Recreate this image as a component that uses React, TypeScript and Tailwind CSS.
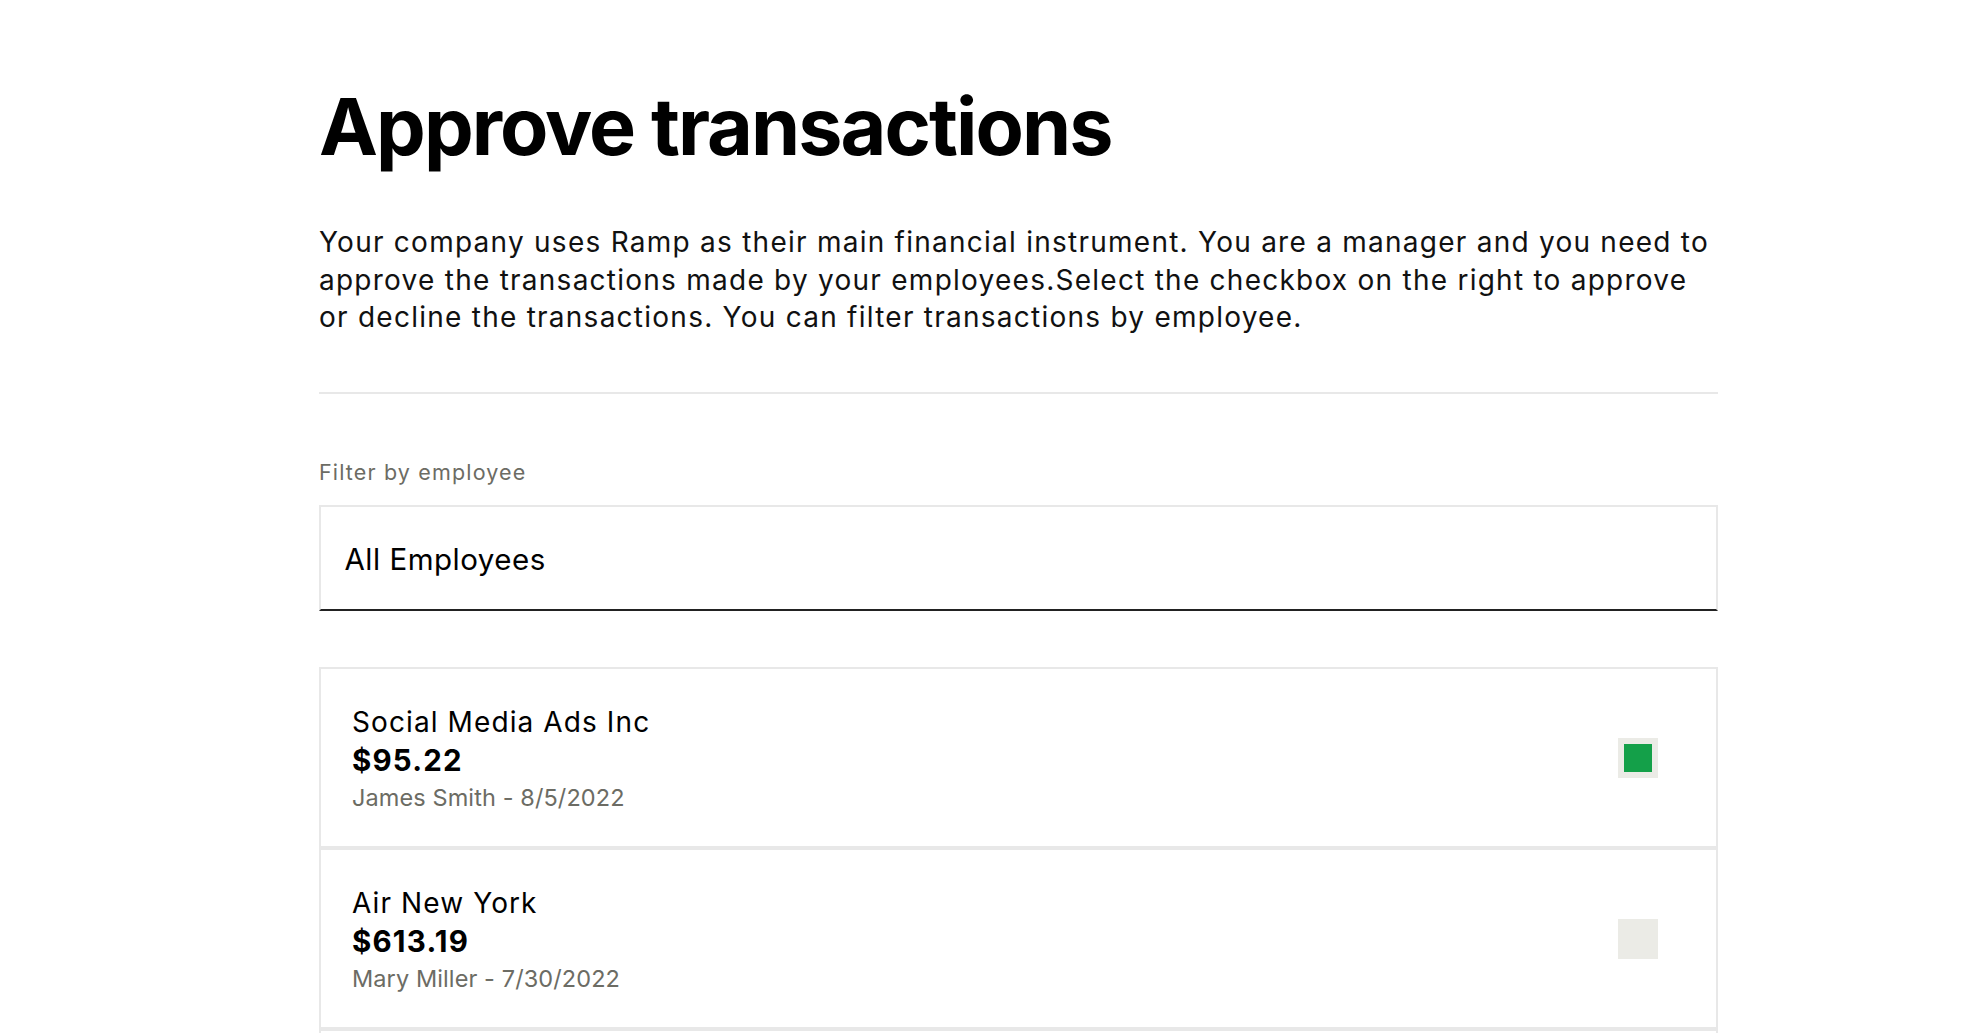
const transactions = [
  { id: 't1', merchant: 'Social Media Ads Inc', amount: '$95.22', employee: 'James Smith', date: '8/5/2022', approved: true },
  { id: 't2', merchant: 'Air New York', amount: '$613.19', employee: 'Mary Miller', date: '7/30/2022', approved: false },
  { id: 't3', merchant: 'Ramp Office Supplies', amount: '$41.50', employee: 'James Smith', date: '7/24/2022', approved: false },
];

const font = "font-['Inter',sans-serif]";

export default function App() {
  return (
    <div className={`min-h-screen bg-white text-black ${font}`}>
      <main className="ml-[319px] w-[1399px] pt-[78px] pb-20">
        <h1 className="text-[79px] font-bold leading-[96px] tracking-[-1.95px]">Approve transactions</h1>

        <p className="mt-[50px] text-[28px] leading-[37.5px] tracking-[1.25px] text-[#111]">
          Your company uses Ramp as their main financial instrument. You are a manager and you need to approve the
          transactions made by your employees.Select the checkbox on the right to approve or decline the
          transactions. You can filter transactions by employee.
        </p>

        <hr className="mt-[55px] h-[2px] border-0 bg-[#e8e8e8]" />

        {/* Filter */}
        <label className="mt-[64px] block text-[21.5px] leading-[28px] tracking-[1.15px] text-[#6c6c64]">
          Filter by employee
        </label>
        <div className="mt-[19px] border-2 border-[#e8e8e8] border-b-[#222] pl-[23.5px] pt-[34px] pb-[32px] text-[29.5px] leading-[36px] tracking-[0.5px]">
          All Employees
        </div>

        {/* Transactions */}
        <div className="mt-[56px] flex flex-col">
          {transactions.map((t) => (
            <div
              key={t.id}
              className="flex h-[181px] items-center justify-between border-2 border-[#e8e8e8] pl-[31px] pr-[58px]"
            >
              <div className="flex flex-col pt-[5px]">
                <span className="text-[28px] leading-[32px] tracking-[1.1px]">{t.merchant}</span>
                <span className="mt-[4.5px] text-[29.5px] font-bold leading-[36px] tracking-[1.2px]">{t.amount}</span>
                <span className="mt-[5px] text-[23.5px] leading-[30px] tracking-[0.1px] text-[#6c6c64]">
                  {t.employee} - {t.date}
                </span>
              </div>
              <div className="mt-[2px] flex h-[40px] w-[40px] items-center justify-center bg-[#ebebe6]">
                {t.approved && <div className="h-[28px] w-[28px] bg-[#14a049]" />}
              </div>
            </div>
          ))}
        </div>
      </main>
    </div>
  );
}
